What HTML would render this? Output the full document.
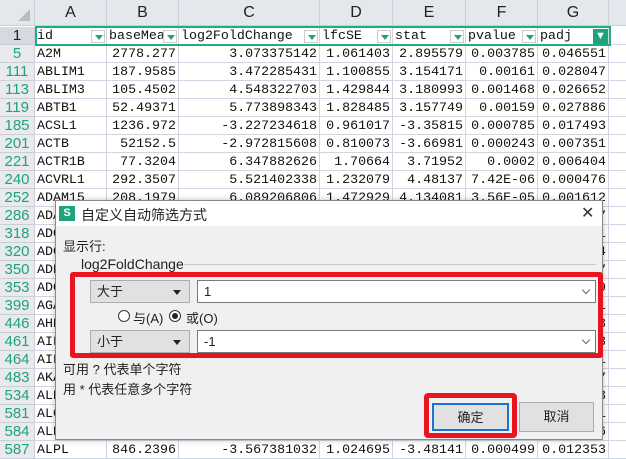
<!DOCTYPE html>
<html><head><meta charset="utf-8"><style>
*{margin:0;padding:0;box-sizing:border-box}
body{width:626px;height:457px;overflow:hidden;background:#fff;position:relative;font-family:"Liberation Sans","Noto Sans CJK SC",sans-serif}
.hdr{position:absolute;top:0;height:26px;background:#e4e7ec;border-right:1px solid #c9ced8;border-bottom:1px solid #c9ced8;text-align:center;font-size:16px;line-height:26px;color:#222}
.rn{position:absolute;left:0;width:35px;height:18px;background:#e8eaee;border-bottom:1px solid #c9ced8;border-right:1px solid #c9ced8;color:#1ea37a;font-size:15px;line-height:18px;text-align:center}
.c{position:absolute;height:18px;border-right:1px solid #cfd5e3;border-bottom:1px solid #cfd5e3;font-family:"Liberation Mono",monospace;font-size:13.3px;line-height:18px;padding:0 2px;white-space:nowrap;overflow:hidden;color:#111}
.r{text-align:right}
.fb{position:absolute;top:30px;width:14px;height:13px;background:#fff;border:1px solid #ccc}
.fb:after{content:"";position:absolute;left:3px;top:4px;border-left:4px solid transparent;border-right:4px solid transparent;border-top:5px solid #1ea37a}
.dlg{position:absolute;left:55px;top:200px;width:548px;height:240px;background:#f0f0f0;border:1px solid #8a8a8a;box-shadow:0 0 6px rgba(0,0,0,.25);font-family:"Liberation Sans","Noto Sans CJK SC",sans-serif;font-size:13px;color:#222}
.dlg .t{position:absolute;left:0;top:0;width:546px;height:25px;background:#fff}
.abs{position:absolute}
.dd{position:absolute;background:#e1e1e1;border:1px solid #adadad;padding-left:6px;line-height:21px}
.dd:after{content:"";position:absolute;right:8px;top:9px;border-left:4px solid transparent;border-right:4px solid transparent;border-top:5px solid #222}
.in{position:absolute;background:#fff;border:1px solid #7a7a7a;padding-left:6px;line-height:21px}
.chev{position:absolute;right:6px;top:6px;width:6px;height:6px;border-right:1px solid #666;border-bottom:1px solid #666;transform:rotate(45deg)}
.btn{position:absolute;background:#e1e1e1;border:1px solid #adadad;text-align:center;line-height:26px}
</style></head><body>
<div class="hdr" style="left:0;width:35px;background:#e4e7ec"><div style="position:absolute;right:4px;bottom:4px;border-left:12px solid transparent;border-bottom:12px solid #b8bcc4"></div></div>
<div class="hdr" style="left:35px;width:72px">A</div>
<div class="hdr" style="left:107px;width:72px">B</div>
<div class="hdr" style="left:179px;width:141px">C</div>
<div class="hdr" style="left:320px;width:73px">D</div>
<div class="hdr" style="left:393px;width:73px">E</div>
<div class="hdr" style="left:466px;width:72px">F</div>
<div class="hdr" style="left:538px;width:71px">G</div>
<div class="hdr" style="left:609px;width:17px;border-right:none"></div>
<div id="g"></div>
<script>
var cols=[35,107,179,320,393,466,538,609];
var rows=[["1","id","baseMea","log2FoldChange","lfcSE","stat","pvalue","padj"],
["5","A2M","2778.277","3.073375142","1.061403","2.895579","0.003785","0.046551"],
["111","ABLIM1","187.9585","3.472285431","1.100855","3.154171","0.00161","0.028047"],
["113","ABLIM3","105.4502","4.548322703","1.429844","3.180993","0.001468","0.026652"],
["119","ABTB1","52.49371","5.773898343","1.828485","3.157749","0.00159","0.027886"],
["185","ACSL1","1236.972","-3.227234618","0.961017","-3.35815","0.000785","0.017493"],
["201","ACTB","52152.5","-2.972815608","0.810073","-3.66981","0.000243","0.007351"],
["221","ACTR1B","77.3204","6.347882626","1.70664","3.71952","0.0002","0.006404"],
["240","ACVRL1","292.3507","5.521402338","1.232079","4.48137","7.42E-06","0.000476"],
["252","ADAM15","208.1979","6.089206806","1.472929","4.134081","3.56E-05","0.001612"],
["286","ADA","1","1","1","1","1","0.00017"],
["318","ADC","1","1","1","1","1","0.00001"],
["320","ADC","1","1","1","1","1","0.00004"],
["350","ADD","1","1","1","1","1","0.00007"],
["353","ADC","1","1","1","1","1","0.00009"],
["399","AGA","1","1","1","1","1","0.00001"],
["446","AHD","1","1","1","1","1","0.00003"],
["461","AIF","1","1","1","1","1","0.00003"],
["464","AIF","1","1","1","1","1","0.00001"],
["483","AKA","1","1","1","1","1","0.00007"],
["534","ALD","1","1","1","1","1","0.00003"],
["581","ALC","1","1","1","1","1","0.00001"],
["584","ALD","1","1","1","1","1","0.00006"],
["587","ALPL","846.2396","-3.567381032","1.024695","-3.48141","0.000499","0.012353"]];
var h="";
rows.forEach(function(r,i){
 var top=27+18*i;
 h+='<div class="rn" style="top:'+top+'px;'+(i==0?'color:#222;background:#d6d9de':'')+'">'+r[0]+'</div>';
 for(var j=1;j<8;j++){
  var w=cols[j]-cols[j-1];
  var right=(i>0&&j>1);
  h+='<div class="c'+(right?' r':'')+'" style="left:'+cols[j-1]+'px;top:'+top+'px;width:'+w+'px">'+r[j]+'</div>';
 }
 h+='<div class="c" style="left:609px;top:'+top+'px;width:17px;border-right:none"></div>';
});
[107,179,320,393,466,538].forEach(function(x){h+='<div class="fb" style="left:'+(x-16)+'px"></div>';});
h+='<div style="position:absolute;left:593px;top:29px;width:15px;height:15px;background:#1ea37a;color:#fff;font-size:11px;line-height:15px;text-align:center">&#x25BC;</div>';
h+='<div style="position:absolute;left:35px;top:26px;width:576px;height:20px;border:2px solid #1fae7d"></div>';
document.getElementById("g").innerHTML=h;
</script>
<div class="dlg">
 <div class="t">
  <div class="abs" style="left:3px;top:5px;width:16px;height:15px;background:#1ea37a;color:#fff;font-size:11px;line-height:15px;text-align:center;font-weight:bold">S</div>
  <div class="abs" style="left:25px;top:4px;font-size:14px">自定义自动筛选方式</div>
  <div class="abs" style="left:525px;top:2px;font-size:16px;color:#333">✕</div>
 </div>
 <div class="abs" style="left:7px;top:35px">显示行:</div>
 <div class="abs" style="left:25px;top:55px;font-size:14px">log2FoldChange</div>
 <div class="abs" style="left:128px;top:63px;width:412px;height:1px;background:#c8c8c8"></div>
 <div class="abs" style="left:14px;top:71px;width:533px;height:86px;border:5px solid #e8141f;border-radius:3px"></div>
 <div class="dd" style="left:34px;top:79px;width:100px;height:23px">大于</div>
 <div class="in" style="left:141px;top:79px;width:399px;height:23px">1<div class="chev"></div></div>
 <div class="abs" style="left:62px;top:109px;width:12px;height:12px;border:1px solid #333;border-radius:50%;background:#fff"></div>
 <div class="abs" style="left:77px;top:107px">与(A)</div>
 <div class="abs" style="left:113px;top:109px;width:12px;height:12px;border:1px solid #333;border-radius:50%;background:#fff"><div style="margin:2px;width:6px;height:6px;border-radius:50%;background:#222"></div></div>
 <div class="abs" style="left:130px;top:107px">或(O)</div>
 <div class="dd" style="left:34px;top:129px;width:100px;height:23px">小于</div>
 <div class="in" style="left:141px;top:129px;width:399px;height:23px">-1<div class="chev"></div></div>
 <div class="abs" style="left:7px;top:158px">可用 ? 代表单个字符</div>
 <div class="abs" style="left:7px;top:178px">用 * 代表任意多个字符</div>
 <div class="abs" style="left:368px;top:192px;width:93px;height:45px;border:5px solid #e8141f;border-radius:4px"></div>
 <div class="btn" style="left:376px;top:202px;width:77px;height:28px;border:2px solid #1a73d0">确定</div>
 <div class="btn" style="left:463px;top:201px;width:75px;height:30px;line-height:28px">取消</div>
</div>
</body></html>
